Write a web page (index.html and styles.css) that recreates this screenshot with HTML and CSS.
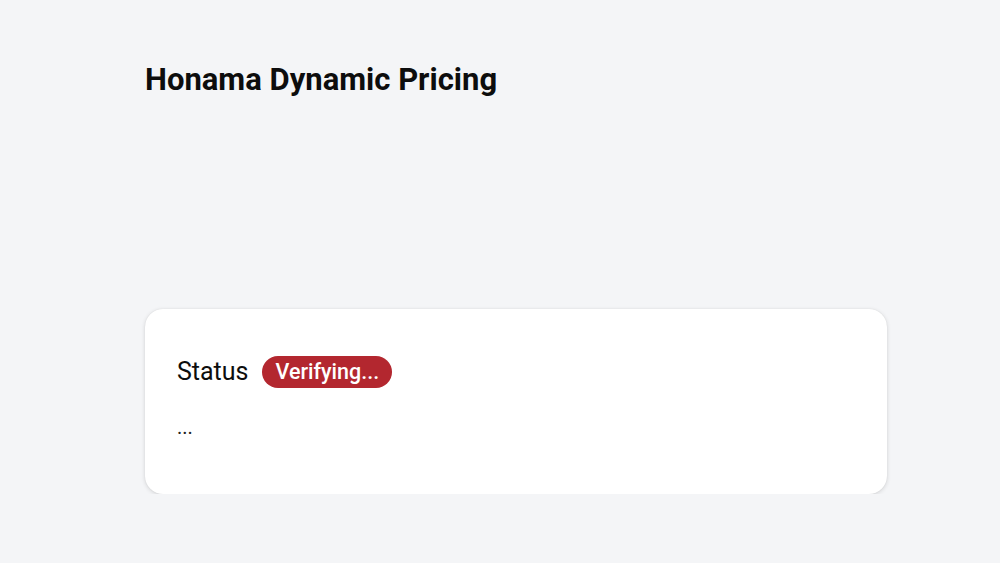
FILE: index.html
```html
<!DOCTYPE html>
<html>
<head>
<meta charset="utf-8">
<link rel="stylesheet" href="styles.css">
</head>
<body>
<div class="page">
  <h1 class="title">Honama Dynamic Pricing</h1>
  <div class="card">
    <div class="status-row">
      <span class="status-label">Status</span>
      <span class="badge">Verifying...</span>
    </div>
    <p class="detail">...</p>
  </div>
</div>
</body>
</html>
```
FILE: styles.css
```css
html, body {
  margin: 0;
  padding: 0;
  background: #f4f5f7;
  font-family: Roboto, "Noto Sans", sans-serif;
  color: #111;
}
.page {
  padding: 62px 0 0 145px;
  width: 742px;
}
.title {
  margin: 0;
  font-size: 31px;
  font-weight: 700;
  line-height: 36px;
  color: #0d0d0d;
}
.card {
  margin-top: 211px;
  background: #fff;
  border-radius: 18px;
  box-shadow: 0 1px 4px rgba(0,0,0,0.14), 0 0 1px rgba(0,0,0,0.1);
  padding: 47px 32px 55px;
}
.status-row {
  display: flex;
  align-items: center;
  gap: 14px;
}
.status-label {
  font-size: 25px;
  font-weight: 400;
  line-height: 32px;
  color: #0d0d0d;
}
.badge {
  background: #b3272f;
  color: #fff;
  font-size: 21.5px;
  font-weight: 500;
  padding: 0 13px;
  border-radius: 16px;
  line-height: 32px;
}
.detail {
  margin: 27px 0 0;
  font-size: 20px;
  line-height: 24px;
  color: #222;
}
```
